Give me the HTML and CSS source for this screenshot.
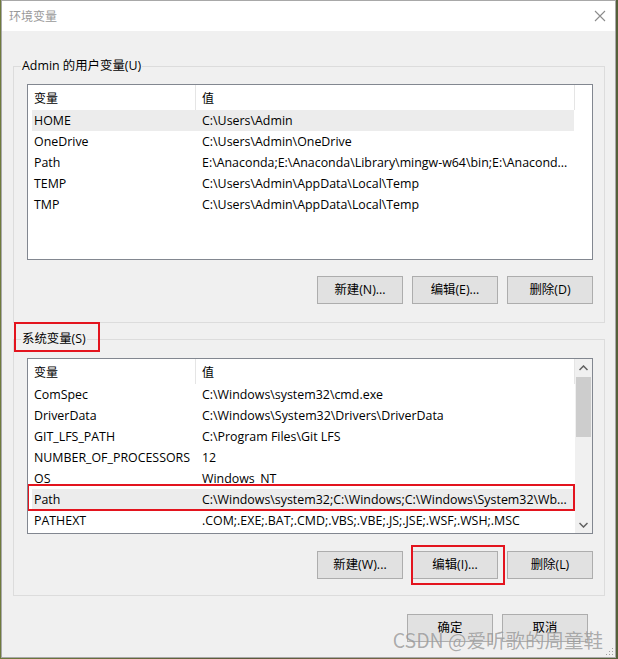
FILE: index.html
```html
<!DOCTYPE html>
<html lang="zh-CN">
<head>
<meta charset="utf-8">
<title>环境变量</title>
<link rel="stylesheet" href="styles.css">
</head>
<body>
<div class="window">
  <div class="titlebar">
    <span class="title">环境变量</span>
    <svg class="close" width="12" height="12" viewBox="0 0 12 12"><path d="M1 1L11 11M11 1L1 11" stroke="#8c8c8c" stroke-width="1.1" fill="none"/></svg>
  </div>
  <div class="content">
    <fieldset class="group group-user">
      <legend class="legend">Admin 的用户变量(U)</legend>
      <div class="listview">
        <div class="lv-main">
          <div class="lv-head">
            <div class="hc hc1">变量</div>
            <div class="hc hc2">值</div>
          </div>
          <div class="row sel"><span class="c1">HOME</span><span class="c2">C:\Users\Admin</span></div>
          <div class="row"><span class="c1">OneDrive</span><span class="c2">C:\Users\Admin\OneDrive</span></div>
          <div class="row"><span class="c1">Path</span><span class="c2">E:\Anaconda;E:\Anaconda\Library\mingw-w64\bin;E:\Anacond...</span></div>
          <div class="row"><span class="c1">TEMP</span><span class="c2">C:\Users\Admin\AppData\Local\Temp</span></div>
          <div class="row"><span class="c1">TMP</span><span class="c2">C:\Users\Admin\AppData\Local\Temp</span></div>
        </div>
      </div>
      <div class="btns">
        <button class="btn">新建(N)...</button>
        <button class="btn">编辑(E)...</button>
        <button class="btn">删除(D)</button>
      </div>
    </fieldset>

    <fieldset class="group group-sys">
      <legend class="legend legend-mark">系统变量(S)</legend>
      <div class="listview">
        <div class="lv-main">
          <div class="lv-head">
            <div class="hc hc1">变量</div>
            <div class="hc hc2">值</div>
          </div>
          <div class="row"><span class="c1">ComSpec</span><span class="c2">C:\Windows\system32\cmd.exe</span></div>
          <div class="row"><span class="c1">DriverData</span><span class="c2">C:\Windows\System32\Drivers\DriverData</span></div>
          <div class="row"><span class="c1">GIT_LFS_PATH</span><span class="c2">C:\Program Files\Git LFS</span></div>
          <div class="row"><span class="c1">NUMBER_OF_PROCESSORS</span><span class="c2">12</span></div>
          <div class="row"><span class="c1">OS</span><span class="c2">Windows_NT</span></div>
          <div class="row sel row-mark"><span class="c1">Path</span><span class="c2">C:\Windows\system32;C:\Windows;C:\Windows\System32\Wb...</span></div>
          <div class="row"><span class="c1">PATHEXT</span><span class="c2">.COM;.EXE;.BAT;.CMD;.VBS;.VBE;.JS;.JSE;.WSF;.WSH;.MSC</span></div>
        </div>
        <div class="scrollbar">
          <div class="sb-arrow"><svg width="9" height="6" viewBox="0 0 9 6"><path d="M0.5 5L4.5 1L8.5 5" stroke="#606060" stroke-width="1.5" fill="none"/></svg></div>
          <div class="sb-track"><div class="sb-thumb"></div></div>
          <div class="sb-arrow"><svg width="9" height="6" viewBox="0 0 9 6"><path d="M0.5 1L4.5 5L8.5 1" stroke="#606060" stroke-width="1.5" fill="none"/></svg></div>
        </div>
      </div>
      <div class="btns">
        <button class="btn">新建(W)...</button>
        <span class="btn-mark"><button class="btn">编辑(I)...</button></span>
        <button class="btn">删除(L)</button>
      </div>
    </fieldset>

    <div class="footer">
      <button class="btn">确定</button>
      <button class="btn">取消</button>
    </div>
  </div>
  <svg class="grip" width="10" height="10" viewBox="0 0 10 10">
    <rect x="8" y="2" width="1" height="1" fill="#a0a0a0"/>
    <rect x="5" y="5" width="1" height="1" fill="#a0a0a0"/>
    <rect x="8" y="5" width="1" height="1" fill="#a0a0a0"/>
    <rect x="2" y="8" width="1" height="1" fill="#a0a0a0"/>
    <rect x="5" y="8" width="1" height="1" fill="#a0a0a0"/>
    <rect x="8" y="8" width="1" height="1" fill="#a0a0a0"/>
  </svg>
  <div class="watermark">CSDN @爱听歌的周童鞋</div>
</div>
</body>
</html>
```

FILE: styles.css
```css
* { box-sizing: border-box; }

html, body {
  margin: 0;
  padding: 0;
}

body {
  width: 618px;
  height: 659px;
  background: linear-gradient(90deg, #6f7a3c 0%, #5b5a3a 40%, #7a6a48 70%, #55603a 100%);
  font-family: "Open Sans", "Noto Sans CJK SC", sans-serif;
  font-size: 12px;
  color: #000;
  overflow: hidden;
}

.window {
  position: relative;
  margin-left: 1px;
  width: 615px;
  height: 658px;
  border: 1px solid #a8a8a8;
  background: #f0f0f0;
}

.titlebar {
  height: 30px;
  background: #fff;
  display: flex;
  align-items: center;
  justify-content: space-between;
  padding: 0 8px 0 7px;
}

.title {
  font-family: "Noto Sans CJK SC", sans-serif;
  font-size: 12px;
  color: #999;
  line-height: 16px;
}

.close {
  display: block;
  margin-right: 1px;
}

.content {
  padding: 0 10px 0 11px;
}

.group {
  margin: 0;
  border: 1px solid #dcdcdc;
  padding: 0 11px 18px 13px;
  min-width: 0;
}

.group-user {
  margin-top: 27px;
  padding-top: 10px;
}

.group-sys {
  margin-top: 8px;
  padding-top: 11px;
  padding-bottom: 16px;
}

.legend {
  font-family: "Open Sans", "Noto Sans CJK SC", sans-serif;
  font-size: 12.4px;
  line-height: 16px;
  padding: 0 1px;
  margin-left: -6px;
}

.legend-mark {
  position: relative;
}

.legend-mark::after {
  content: "";
  position: absolute;
  left: -7px;
  right: -13px;
  top: -9px;
  bottom: -5px;
  border: 2px solid #e3141e;
}

.listview {
  display: flex;
  width: 566px;
  height: 176px;
  border: 1px solid #828790;
  background: #fff;
}

.lv-main {
  width: 547px;
  overflow: hidden;
}

.lv-head {
  display: flex;
  height: 25px;
}

.hc {
  font-family: "Noto Sans CJK SC", sans-serif;
  line-height: 25px;
  padding-left: 6px;
  border-right: 1px solid #e5e5e5;
}

.hc1 { width: 168px; }
.hc2 { width: 379px; }

.row {
  display: flex;
  height: 21px;
  line-height: 21px;
  margin-left: 4px;
  width: 542px;
  white-space: nowrap;
  font-size: 12.4px;
}

.row.sel {
  background: #ececec;
}

.row-mark {
  position: relative;
}

.row-mark::after {
  content: "";
  position: absolute;
  left: -5px;
  right: -1px;
  top: -5px;
  bottom: -1px;
  border: 2px solid #e3141e;
}

.c1 {
  width: 164px;
  padding-left: 2px;
  overflow: hidden;
}

.c2 {
  padding-left: 6px;
}

.scrollbar {
  width: 17px;
  background: #f0f0f0;
  display: flex;
  flex-direction: column;
}

.sb-arrow {
  height: 17px;
  display: flex;
  align-items: center;
  justify-content: center;
}

.sb-track {
  flex: 1;
  padding-top: 1px;
}

.sb-thumb {
  width: 15px;
  height: 60px;
  margin-left: 1px;
  background: #cdcdcd;
}

.btns {
  display: flex;
  justify-content: flex-end;
  gap: 9px;
  margin-top: 16px;
}

.group-sys .btns {
  margin-top: 17px;
}

.btn {
  width: 86px;
  height: 28px;
  margin: 0;
  padding: 0;
  border: 1px solid #adadad;
  background: #e1e1e1;
  font-family: "Open Sans", "Noto Sans CJK SC", sans-serif;
  font-size: 12.4px;
  color: #000;
  line-height: 26px;
}

.btn-mark {
  position: relative;
  display: block;
}

.btn-mark .btn {
  display: block;
}

.btn-mark::after {
  content: "";
  position: absolute;
  left: -1px;
  right: -7px;
  top: -6px;
  bottom: -6px;
  border: 2px solid #e3141e;
}

.footer {
  display: flex;
  justify-content: flex-end;
  gap: 9px;
  margin-top: 18px;
  padding-right: 17px;
}

.grip {
  position: absolute;
  right: 1px;
  bottom: 1px;
}

.watermark {
  position: absolute;
  right: 12px;
  bottom: 5px;
  font-family: "Noto Sans CJK SC", sans-serif;
  font-size: 19.5px;
  line-height: 24px;
  color: rgba(105, 105, 105, 0.55);
  text-shadow: 0 0 1px rgba(255, 255, 255, 0.6);
  white-space: nowrap;
}
```
